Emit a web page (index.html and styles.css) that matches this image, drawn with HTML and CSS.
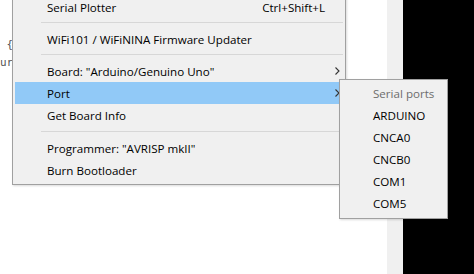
FILE: index.html
```html
<!DOCTYPE html>
<html lang="en">
<head>
  <meta charset="UTF-8">
  <title>Tools menu</title>
  <link rel="stylesheet" href="styles.css">
</head>
<body>
  <div class="window">
    <div class="editor">
      <pre class="code"> {
ur</pre>
    </div>
    <div class="scrollbar"></div>
    <div class="desktop"></div>

    <div class="menu">
      <div class="item"><span>Serial Plotter</span><span class="shortcut">Ctrl+Shift+L</span></div>
      <div class="sep"></div>
      <div class="item"><span>WiFi101 / WiFiNINA Firmware Updater</span></div>
      <div class="sep"></div>
      <div class="item">
        <span>Board: "Arduino/Genuino Uno"</span>
        <svg class="arrow" width="5" height="8" viewBox="0 0 5 8"><polyline points="0.5,0.5 4,4 0.5,7.5" fill="none" stroke="#333" stroke-width="1.1"/></svg>
      </div>
      <div class="item active">
        <span>Port</span>
        <svg class="arrow" width="5" height="8" viewBox="0 0 5 8"><polyline points="0.5,0.5 4,4 0.5,7.5" fill="none" stroke="#333" stroke-width="1.1"/></svg>
      </div>
      <div class="item"><span>Get Board Info</span></div>
      <div class="sep last"></div>
      <div class="item"><span>Programmer: "AVRISP mkII"</span></div>
      <div class="item"><span>Burn Bootloader</span></div>
    </div>

    <div class="submenu">
      <div class="item label">Serial ports</div>
      <div class="item">ARDUINO</div>
      <div class="item">CNCA0</div>
      <div class="item">CNCB0</div>
      <div class="item">COM1</div>
      <div class="item">COM5</div>
    </div>
  </div>
</body>
</html>
```

FILE: styles.css
```css
body {
  margin: 0;
  font-family: "Open Sans", "Noto Sans", sans-serif;
  font-size: 11.6px;
  color: #000;
  overflow: hidden;
}
.window {
  position: relative;
  display: flex;
  height: 274px;
  width: 474px;
}
.editor {
  width: 387px;
  background: #fff;
  overflow: hidden;
}
.code {
  margin: 0;
  padding-top: 36px;
  font-family: "DejaVu Sans Mono", "Liberation Mono", monospace;
  font-size: 11px;
  line-height: 18px;
  color: #555;
}
.scrollbar {
  width: 16px;
  background: #f0f0f0;
}
.desktop {
  flex: 1;
  background: #000;
}

.menu {
  position: absolute;
  left: 12px;
  top: -7px;
  width: 332px;
  padding: 2px 0 3px;
  background: #f0f0f0;
  border: 1px solid #a0a0a0;
  box-shadow: 1px 1px 2px rgba(0,0,0,0.15);
}
.menu .item {
  display: flex;
  align-items: center;
  height: 22px;
  margin: 0 2px;
  padding-left: 32px;
  padding-right: 18px;
  position: relative;
}
.menu .item.active {
  background: #91c9f7;
}
.shortcut {
  margin-left: auto;
}
.arrow {
  position: absolute;
  right: 3px;
  top: 7px;
}
.sep {
  height: 1px;
  background: #d7d7d7;
  margin: 4px 2px 5px 28px;
}
.sep.last {
  margin: 5px 2px 5px 28px;
}

.submenu {
  position: absolute;
  left: 339px;
  top: 79px;
  width: 107px;
  padding: 3px 0;
  background: #f0f0f0;
  border: 1px solid #a0a0a0;
  box-shadow: 1px 1px 2px rgba(0,0,0,0.15);
}
.submenu .item {
  height: 22px;
  line-height: 22px;
  padding-left: 33px;
}
.submenu .label {
  color: #6d6d6d;
}
```
